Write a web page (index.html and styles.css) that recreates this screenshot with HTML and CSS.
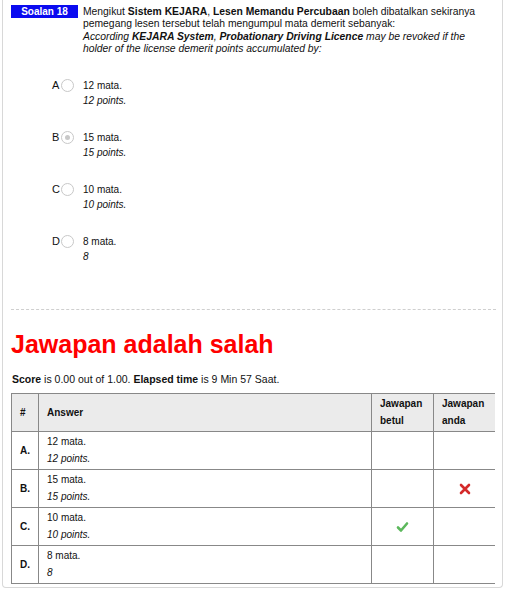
FILE: index.html
```html
<!DOCTYPE html>
<html>
<head>
<meta charset="utf-8">
<link rel="stylesheet" href="styles.css">
</head>
<body>
<div class="frame">
  <div class="question">
    <div class="badge">Soalan 18</div>
    <div class="qtext">
      Mengikut <b>Sistem KEJARA</b>, <b>Lesen Memandu Percubaan</b> boleh dibatalkan sekiranya pemegang lesen tersebut telah mengumpul mata demerit sebanyak:<br>
      <i>According <b>KEJARA System</b>, <b>Probationary Driving Licence</b> may be revoked if the holder of the license demerit points accumulated by:</i>
    </div>
  </div>
  <div class="options">
    <div class="opt"><span class="letter">A</span><span class="radio"></span><div class="otext">12 mata.<br><i>12 points.</i></div></div>
    <div class="opt"><span class="letter">B</span><span class="radio checked"></span><div class="otext">15 mata.<br><i>15 points.</i></div></div>
    <div class="opt"><span class="letter">C</span><span class="radio"></span><div class="otext">10 mata.<br><i>10 points.</i></div></div>
    <div class="opt"><span class="letter">D</span><span class="radio"></span><div class="otext">8 mata.<br><i>8</i></div></div>
  </div>
  <div class="sep"></div>
  <h1 class="result">Jawapan adalah salah</h1>
  <p class="score"><b>Score</b> is 0.00 out of 1.00. <b>Elapsed time</b> is 9 Min 57 Saat.</p>
  <table class="ans">
    <tr class="head"><th class="c-num">#</th><th class="c-ans">Answer</th><th class="c-ok">Jawapan betul</th><th class="c-you">Jawapan anda</th></tr>
    <tr><td class="c-num"><b>A.</b></td><td class="c-ans">12 mata.<br><i>12 points.</i></td><td class="c-ok"></td><td class="c-you"></td></tr>
    <tr><td class="c-num"><b>B.</b></td><td class="c-ans">15 mata.<br><i>15 points.</i></td><td class="c-ok"></td><td class="c-you"><svg class="ico" width="12" height="12" viewBox="0 0 12 12"><path d="M2 2 L10 10 M10 2 L2 10" stroke="#d42a2a" stroke-width="2.6" stroke-linecap="round"/></svg></td></tr>
    <tr><td class="c-num"><b>C.</b></td><td class="c-ans">10 mata.<br><i>10 points.</i></td><td class="c-ok"><svg class="ico" width="13" height="12" viewBox="0 0 13 12"><path d="M2 6.5 L5 9.5 L11 2.5" fill="none" stroke="#5cb85c" stroke-width="2.6" stroke-linecap="round" stroke-linejoin="round"/></svg></td><td class="c-you"></td></tr>
    <tr><td class="c-num"><b>D.</b></td><td class="c-ans">8 mata.<br><i>8</i></td><td class="c-ok"></td><td class="c-you"></td></tr>
  </table>
</div>
</body>
</html>
```
FILE: styles.css
```css
html, body {
  margin: 0;
  padding: 0;
  background: #fff;
}
body {
  font-family: "Liberation Sans", Arial, sans-serif;
  color: #111;
  font-size: 10px;
}
.frame {
  margin: -10px 5px 0 2px;
  padding: 15px 7px 6px 8px;
  border: 1px solid #d8d8d8;
  border-top: none;
  border-radius: 0 0 4px 4px;
  height: 598px;
  box-sizing: border-box;
  width: 501px;
}
.question {
  display: flex;
  align-items: flex-start;
}
.badge {
  background: #0a0af0;
  color: #fff;
  font-weight: bold;
  font-size: 10px;
  width: 67px;
  height: 13px;
  line-height: 13px;
  text-align: center;
  flex: none;
}
.qtext {
  margin-left: 5px;
  font-size: 10.35px;
  line-height: 12.4px;
  width: 404px;
  margin-top: 1px;
}
.options {
  margin-top: 22px;
  display: flex;
  flex-direction: column;
  gap: 20px;
}
.opt {
  display: flex;
  align-items: flex-start;
  padding-left: 41px;
  height: 32px;
}
.letter {
  font-size: 11px;
  width: 9px;
  line-height: 15px;
}
.radio {
  width: 11px;
  height: 11px;
  border: 1px solid #c8c8c8;
  border-radius: 50%;
  margin-top: 1px;
  flex: none;
  position: relative;
  background: #fff;
}
.radio.checked::after {
  content: "";
  position: absolute;
  left: 3px;
  top: 3px;
  width: 5px;
  height: 5px;
  border-radius: 50%;
  background: #c8c8c8;
}
.otext {
  margin-left: 9px;
  font-size: 10px;
  line-height: 15.5px;
}
.sep {
  margin-top: 43px;
  border-top: 1px dashed #cfcfcf;
  width: 485px;
}
.result {
  color: #f00;
  font-size: 25px;
  font-weight: bold;
  margin: 19px 0 0 0;
  line-height: 30px;
}
.score {
  margin: 14px 0 0 1px;
  font-size: 10.5px;
  line-height: 12px;
}
.ans {
  margin-top: 8px;
  border-collapse: collapse;
  width: 484px;
  font-size: 10px;
}
.ans th, .ans td {
  border: 1px solid #888;
  text-align: left;
  padding: 0 8px;
}
.ans .c-you { border-right: none; }
.ans th {
  background: #ebebeb;
  font-weight: bold;
  height: 37px;
  line-height: 17px;
}
.ans td {
  height: 37px;
  line-height: 17px;
}
.c-num { width: 10px; }
.c-ok { width: 45px; }
.c-you { width: 45px; }
td.c-ok, td.c-you { text-align: center; }
.ico { vertical-align: middle; }
```
